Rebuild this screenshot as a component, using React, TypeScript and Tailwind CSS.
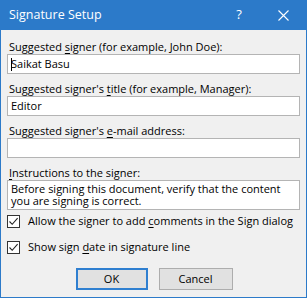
import React from 'react';

const font = { fontFamily: '"Segoe UI", "Open Sans", "Noto Sans", sans-serif' };

function U({ children }: { children: React.ReactNode }) {
  return <span className="underline underline-offset-[2px] decoration-[1px]">{children}</span>;
}

function Field({ label, value, caret }: { label: React.ReactNode; value?: string; caret?: boolean }) {
  return (
    <div className="flex flex-col">
      <div className="h-[14px] pl-[2px] leading-[14px]">{label}</div>
      <div className="relative h-[20px] border border-[#b4b4b4] bg-white pl-[3px] leading-[18px]">
        {caret && <span className="absolute left-[3px] top-[3px] h-[13px] w-px bg-black" />}
        {value}
      </div>
    </div>
  );
}

function Check({ children }: { children: React.ReactNode }) {
  return (
    <div className="flex items-center gap-[8px] h-[14px]">
      <div className="flex h-[13px] w-[13px] shrink-0 items-center justify-center border border-[#333] bg-white">
        <svg width="11" height="11" viewBox="0 0 11 11">
          <path d="M1.5 5.5 L4.2 8.3 L9.6 2.2" fill="none" stroke="#222" strokeWidth="1.1" />
        </svg>
      </div>
      <span className="leading-[14px] whitespace-nowrap">{children}</span>
    </div>
  );
}

export default function App() {
  return (
    <div style={font} className="w-[307px] h-[298px] border border-[#2c7ac9] bg-[#f0f0f0] text-[11px] text-black flex flex-col">
      {/* Title bar */}
      <div className="h-[30px] shrink-0 bg-[#2c7ac9] flex items-center text-white -mt-px -mx-px">
        <span className="pl-[9px] text-[12.5px] flex-1 pt-[1px]">Signature Setup</span>
        <span className="w-[20px] text-center text-[13px] mr-[29px]">?</span>
        <svg width="11" height="11" viewBox="0 0 11 11" className="mr-[18px]">
          <path d="M0.5 0.5 L10.5 10.5 M10.5 0.5 L0.5 10.5" stroke="white" strokeWidth="1.1" />
        </svg>
      </div>

      <div className="px-[6px] pt-[10px] flex flex-col gap-[8px]">
        <Field label={<>Suggested <U>s</U>igner (for example, John Doe):</>} value="Saikat Basu" caret />
        <Field label={<>Suggested signer's <U>t</U>itle (for example, Manager):</>} value="Editor" />
        <Field label={<>Suggested signer's <U>e</U>-mail address:</>} />
        <div className="flex flex-col">
          <div className="h-[14px] pl-[2px] leading-[14px]"><U>I</U>nstructions to the signer:</div>
          <div className="h-[30px] border border-[#b4b4b4] bg-white pl-[3px] pt-[2px] leading-[12px]">
            Before signing this document, verify that the content you are signing is correct.
          </div>
        </div>
      </div>

      <div className="px-[6px] pt-[4px] flex flex-col gap-[12px]">
        <Check>Allow the signer to add <U>c</U>omments in the Sign dialog</Check>
        <Check>Show sign <U>d</U>ate in signature line</Check>
      </div>

      <div className="flex justify-center gap-[11px] pt-[14px] pl-[1px]">
        <button className="h-[22px] w-[72px] border-2 border-[#2f7fd0] bg-[#e1e1e1] leading-[18px]">OK</button>
        <button className="h-[22px] w-[74px] border border-[#adadad] bg-[#e1e1e1] leading-[20px]">Cancel</button>
      </div>
    </div>
  );
}
